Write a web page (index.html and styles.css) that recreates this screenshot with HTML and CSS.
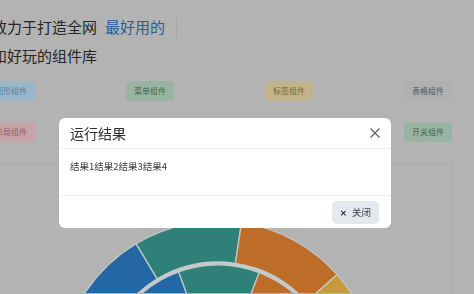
FILE: index.html
```html
<!DOCTYPE html>
<html lang="zh">
<head>
  <meta charset="UTF-8">
  <meta name="viewport" content="width=device-width, initial-scale=1.0">
  <title>组件库</title>
  <link rel="stylesheet" href="styles.css">
</head>
<body>
<div class="page">
  <div class="hero">
    <div class="hero-line">致力于打造全网<span class="hl">最好用的</span><span class="divider"></span></div>
    <div class="hero-line">和好玩的组件库</div>
  </div>

  <div class="tags">
    <span class="tag blue">图形组件</span>
    <span class="tag green">菜单组件</span>
    <span class="tag yellow">标签组件</span>
    <span class="tag gray">表格组件</span>
  </div>
  <div class="tags second">
    <span class="tag red">布局组件</span>
    <span class="tag blue">表单组件</span>
    <span class="tag yellow">弹窗组件</span>
    <span class="tag green">开关组件</span>
  </div>

  <div class="card">
    <svg class="chart" viewBox="-13 165 464 129" width="464" height="129">
      <g stroke="#c2c8c7" stroke-width="1.3">
        <path fill="#2367a5" d="M61.4 353.4 A159 159 0 0 1 136.1 244.7 L157.2 279.8 A118 118 0 0 0 101.8 360.5 Z"/>
        <path fill="#2f8079" d="M136.1 244.7 A159 159 0 0 1 241.5 223.7 L235.4 264.3 A118 118 0 0 0 157.2 279.8 Z"/>
        <path fill="#bd6d27" d="M241.5 223.7 A159 159 0 0 1 337.1 275.6 L306.4 302.8 A118 118 0 0 0 235.4 264.3 Z"/>
        <path fill="#c99a3b" d="M337.1 275.6 A159 159 0 0 1 374.6 353.4 L334.2 360.5 A118 118 0 0 0 306.4 302.8 Z"/>
      </g>
      <circle cx="218" cy="381" r="116.5" fill="none" stroke="#c5cbca" stroke-width="3"/>
      <g stroke="#c2c8c7" stroke-width="1.3">
        <path fill="#2367a5" d="M118.4 323.5 A115 115 0 0 1 178.7 272.9 L193.4 313.3 A72 72 0 0 0 155.6 345 Z"/>
        <path fill="#2f8079" d="M178.7 272.9 A115 115 0 0 1 259.2 273.6 L243.8 313.8 A72 72 0 0 0 193.4 313.3 Z"/>
        <path fill="#bd6d27" d="M259.2 273.6 A115 115 0 0 1 317.6 323.5 L280.4 345 A72 72 0 0 0 243.8 313.8 Z"/>
      </g>
    </svg>
  </div>
</div>

<div class="dialog">
  <div class="dialog-head">
    <span class="dialog-title">运行结果</span>
    <svg class="close-icon" viewBox="0 0 10 10" width="10" height="10">
      <path d="M0.5 0.5 L9.5 9.5 M9.5 0.5 L0.5 9.5" stroke="#5c5c5c" stroke-width="1.1" fill="none"/>
    </svg>
  </div>
  <div class="dialog-body">结果1结果2结果3结果4</div>
  <div class="dialog-foot">
    <button class="btn-close"><span class="x">✕</span>关闭</button>
  </div>
</div>
</body>
</html>
```

FILE: styles.css
```css
body { margin: 0; background: #b3b3b3; font-family: "Noto Sans CJK SC", "Noto Sans", sans-serif; overflow: hidden; }
.page { margin-left: -13px; width: 487px; }

.hero { padding: 12px 0 0 5px; color: #262626; font-size: 15px; }
.hero-line { line-height: 29px; height: 29px; white-space: nowrap; }
.hero .hl { color: #2a5e9c; margin-left: 8px; }
.divider { display: inline-block; width: 1px; height: 21px; background: #a6a6a6; margin-left: 11px; vertical-align: middle; }

.tags { display: flex; gap: 91px; margin-top: 11px; }
.tags.second { margin-top: 21px; }
.tag { display: block; width: 48px; height: 20px; line-height: 20px; text-align: center; font-size: 8px; border-radius: 4px; }
.tag.blue { background: #99b7c8; color: #54809c; }
.tag.green { background: #9ab4a4; color: #46654f; }
.tag.yellow { background: #c1b48b; color: #76652f; }
.tag.gray { background: #b0b0b0; color: #575757; }
.tag.red { background: #c8a4a8; color: #965a62; }

.card { margin-top: 21px; width: 464px; border-top: 1px solid #a9a9a9; border-right: 1px solid #a9a9a9; height: 200px; }
.chart { display: block; }

.dialog { position: fixed; left: 59px; top: 118px; width: 332px; background: #fff; border-radius: 6px; overflow: hidden; }
.dialog-head { height: 31px; box-sizing: border-box; border-bottom: 1px solid #f0f0f0; display: flex; align-items: center; justify-content: space-between; padding: 0 11px; }
.dialog-title { font-size: 14px; color: #2f2f2f; }
.close-icon { display: block; }
.dialog-body { height: 47px; box-sizing: border-box; border-bottom: 1px solid #f0f0f0; padding: 12px 11px 0; font-size: 9.5px; line-height: 11px; color: #3a3a3a; }
.dialog-foot { height: 32px; display: flex; align-items: center; justify-content: flex-end; padding: 0 12px; }
.btn-close { height: 23px; padding: 0 8px; border: none; border-radius: 5px; background: #e6e8f0; color: #404040; font-family: inherit; font-size: 9.5px; display: flex; align-items: center; }
.btn-close .x { font-size: 8px; font-weight: bold; margin-right: 5px; color: #333; }
```
